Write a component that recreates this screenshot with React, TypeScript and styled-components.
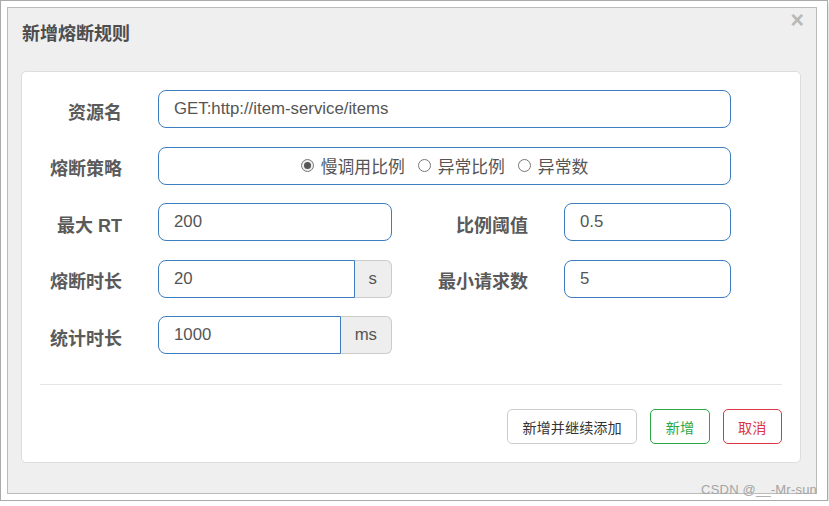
import React from 'react'
import styled, { createGlobalStyle } from 'styled-components'

const GlobalStyle = createGlobalStyle`
  html, body {
    margin: 0;
    padding: 0;
    background: #fff;
  }
  body {
    font-family: 'Liberation Sans', 'Noto Sans CJK SC', sans-serif;
  }
  * {
    box-sizing: border-box;
  }
`

const font = `'Liberation Sans', 'Noto Sans CJK SC', sans-serif`

const Frame = styled.div`
  position: relative;
  width: 828px;
  height: 501px;
  border: 1px solid #aaa;
  padding: 6px 10px 6px 6px;
  background: #fff;
  box-shadow: 0 3px 4px rgba(0, 0, 0, 0.25);
`

const Modal = styled.div`
  position: relative;
  height: 100%;
  border: 1px solid #bbb;
  background: #efefef;
  display: flex;
  flex-direction: column;
`

const Header = styled.div`
  height: 63px;
  padding: 14px 0 0 14px;
`

const Title = styled.h4`
  margin: 0;
  font-family: ${font};
  font-size: 18px;
  line-height: 24px;
  font-weight: 700;
  color: #4d4d4d;
`

const Close = styled.span`
  position: absolute;
  top: 0;
  right: 12px;
  font-family: ${font};
  font-size: 23px;
  font-weight: 700;
  line-height: 24px;
  color: #b8b8b8;
  cursor: pointer;
`

const Card = styled.div`
  margin: 0 15px 0 13px;
  height: 392px;
  border: 1px solid #ddd;
  border-radius: 5px;
  background: #fff;
  padding: 18px 18px 18px 0;
  display: flex;
  flex-direction: column;
`

const Form = styled.div`
  display: grid;
  grid-template-columns: 100px 234px 100px 167px;
  grid-auto-rows: 38px;
  column-gap: 36px;
  row-gap: 18.5px;
`

const Label = styled.label`
  display: flex;
  align-items: center;
  justify-content: flex-end;
  padding-top: 3px;
  font-family: ${font};
  font-size: 18px;
  font-weight: 700;
  color: #5a5a5a;
  white-space: nowrap;
`

const Field = styled.div<{ $wide?: boolean }>`
  display: flex;
  grid-column: ${(p) => (p.$wide ? '2 / 5' : 'auto')};
  height: 38px;
`

const Input = styled.input<{ $addon?: boolean }>`
  flex: 1;
  min-width: 0;
  height: 100%;
  border: 1px solid #3b7dbf;
  border-radius: ${(p) => (p.$addon ? '8px 0 0 8px' : '8px')};
  padding: 0 15px;
  font-family: ${font};
  font-size: 16.8px;
  color: #555;
  background: #fff;
  outline: none;
`

const Addon = styled.span`
  display: flex;
  align-items: center;
  justify-content: center;
  min-width: 37px;
  padding: 0 14px;
  background: #eee;
  border: 1px solid #ccc;
  border-left: none;
  border-radius: 0 6px 6px 0;
  font-family: ${font};
  font-size: 16.8px;
  color: #555;
`

const RadioBox = styled.div`
  flex: 1;
  display: flex;
  align-items: center;
  justify-content: center;
  gap: 13px;
  border: 1px solid #3b7dbf;
  border-radius: 8px;
`

const RadioOption = styled.label`
  display: flex;
  align-items: center;
  gap: 7px;
  font-family: ${font};
  font-size: 16.8px;
  color: #555;
  cursor: pointer;
`

const RadioDot = styled.span<{ $checked?: boolean }>`
  position: relative;
  width: 13px;
  height: 13px;
  border-radius: 50%;
  border: 1px solid #777;
  background: ${(p) => (p.$checked ? '#eee' : '#fff')};

  &::after {
    content: '';
    display: ${(p) => (p.$checked ? 'block' : 'none')};
    position: absolute;
    top: 2px;
    left: 2px;
    width: 7px;
    height: 7px;
    border-radius: 50%;
    background: #555;
  }
`

const Divider = styled.hr`
  margin: 30px 0 0 18px;
  border: none;
  border-top: 1px solid #e5e5e5;
`

const Footer = styled.div`
  margin-top: 24px;
  display: flex;
  justify-content: flex-end;
  gap: 13px;
`

const Button = styled.button<{ $tone?: 'default' | 'success' | 'danger' }>`
  height: 35px;
  padding: 0 14.5px;
  border-radius: 5px;
  background: #fff;
  font-family: ${font};
  font-size: 14.2px;
  cursor: pointer;
  border: 1px solid
    ${(p) =>
      p.$tone === 'success' ? '#28a745' : p.$tone === 'danger' ? '#dc3545' : '#ccc'};
  color: ${(p) =>
    p.$tone === 'success' ? '#28a745' : p.$tone === 'danger' ? '#dc3545' : '#333'};
`

const Watermark = styled.span`
  position: absolute;
  right: 10px;
  bottom: 3px;
  font-family: ${font};
  font-size: 13px;
  color: #a5a5a5;
  letter-spacing: 0.2px;
`

const strategies = ['慢调用比例', '异常比例', '异常数']

const App: React.FC = () => {
  return (
    <>
      <GlobalStyle />
      <Frame>
        <Modal>
          <Header>
            <Title>新增熔断规则</Title>
          </Header>
          <Close>×</Close>
          <Card>
            <Form>
              <Label>资源名</Label>
              <Field $wide>
                <Input defaultValue="GET:http://item-service/items" />
              </Field>

              <Label>熔断策略</Label>
              <Field $wide>
                <RadioBox>
                  {strategies.map((s, i) => (
                    <RadioOption key={s}>
                      <RadioDot $checked={i === 0} />
                      {s}
                    </RadioOption>
                  ))}
                </RadioBox>
              </Field>

              <Label>最大 RT</Label>
              <Field>
                <Input defaultValue="200" />
              </Field>
              <Label>比例阈值</Label>
              <Field>
                <Input defaultValue="0.5" />
              </Field>

              <Label>熔断时长</Label>
              <Field>
                <Input $addon defaultValue="20" />
                <Addon>s</Addon>
              </Field>
              <Label>最小请求数</Label>
              <Field>
                <Input defaultValue="5" />
              </Field>

              <Label>统计时长</Label>
              <Field>
                <Input $addon defaultValue="1000" />
                <Addon>ms</Addon>
              </Field>
            </Form>
            <Divider />
            <Footer>
              <Button>新增并继续添加</Button>
              <Button $tone="success">新增</Button>
              <Button $tone="danger">取消</Button>
            </Footer>
          </Card>
        </Modal>
        <Watermark>CSDN @__-Mr-sun</Watermark>
      </Frame>
    </>
  )
}

export default App
